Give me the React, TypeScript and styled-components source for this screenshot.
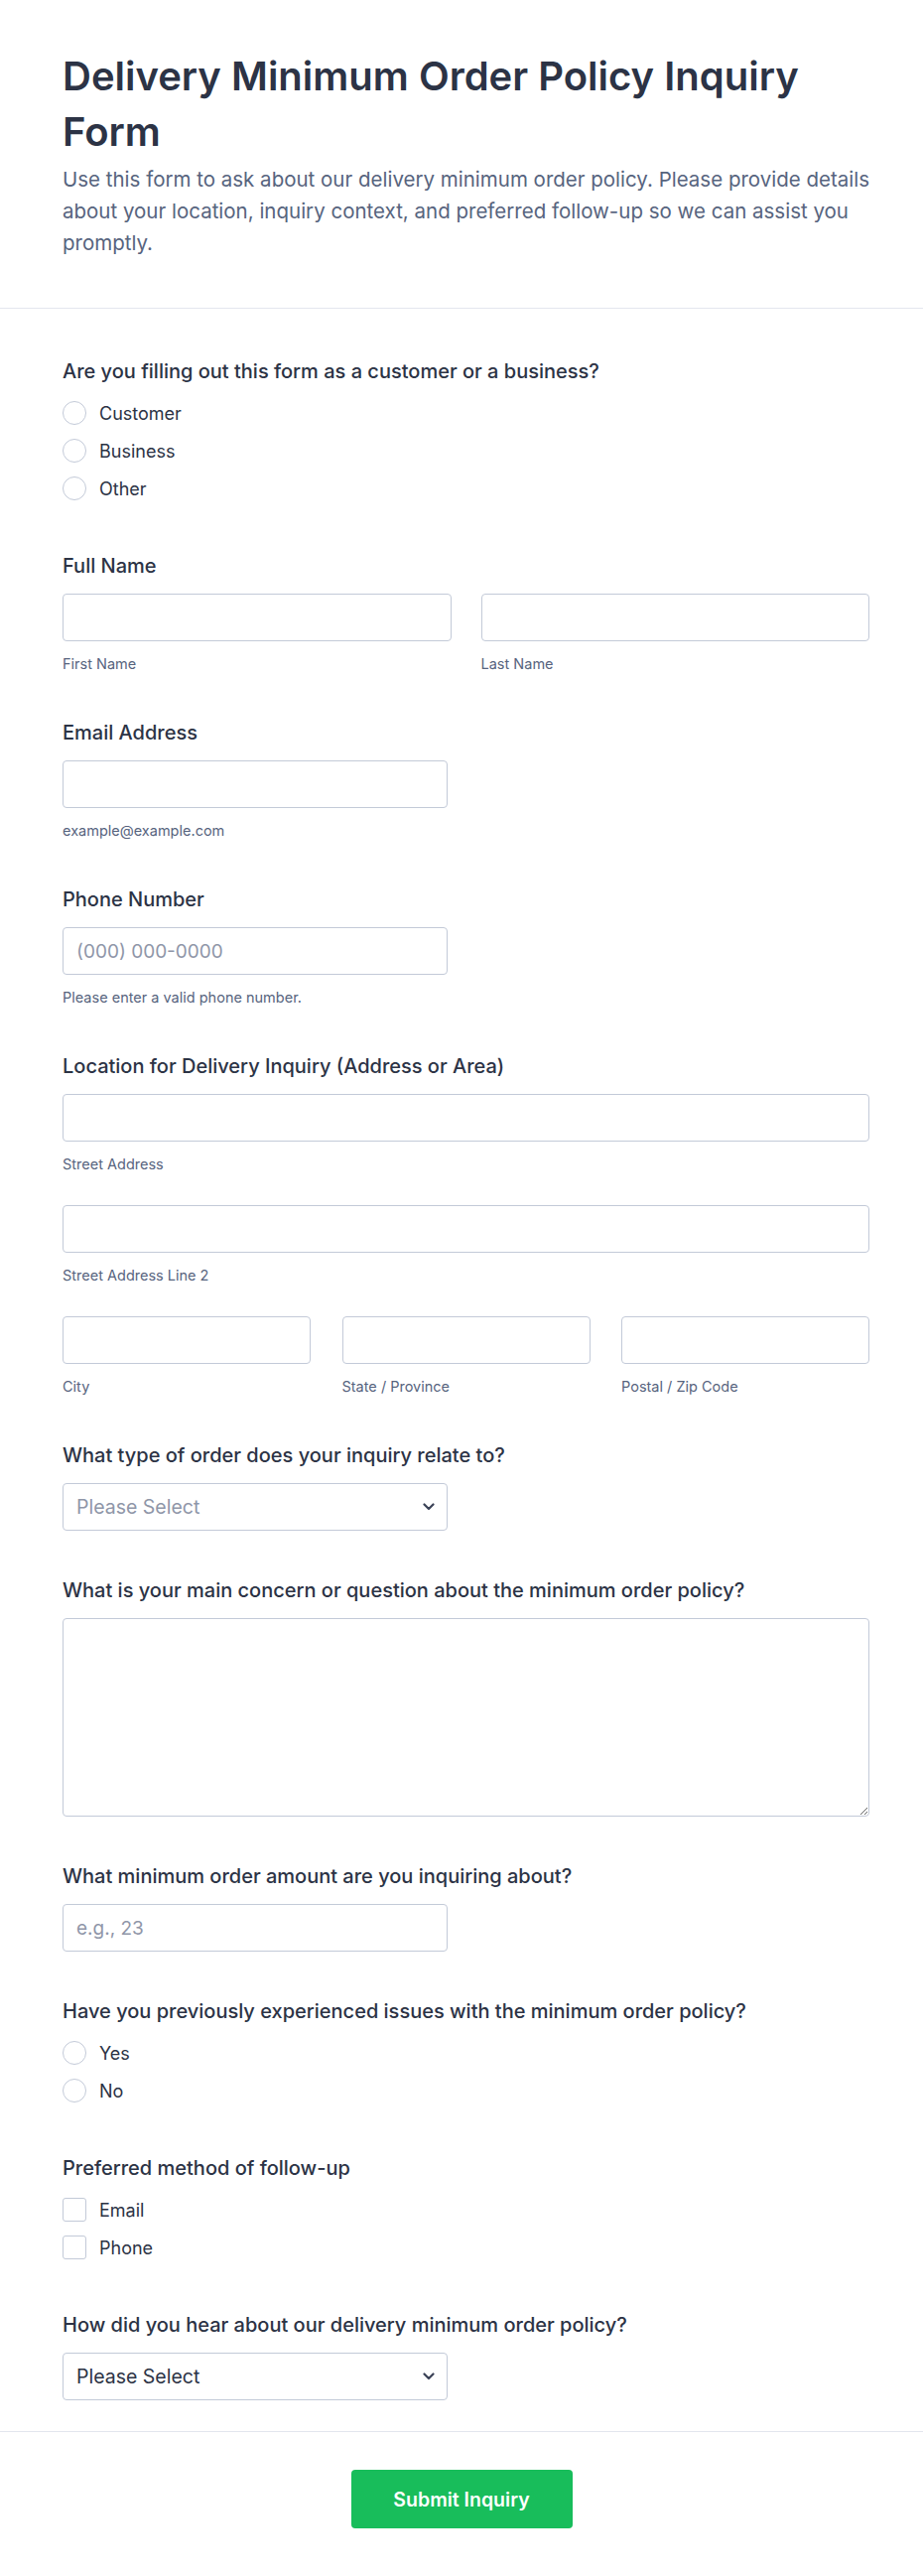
import React from "react";
import styled, { createGlobalStyle } from "styled-components";

const GlobalStyle = createGlobalStyle`
    * { box-sizing: border-box; }
    body {
        margin: 0;
        background: #fff;
        font-family: Inter, "Noto Sans", sans-serif;
        color: #2c3345;
    }
`;

const Page = styled.div`
    width: 930px;
    background: #fff;
`;

const Header = styled.header`
    padding: 49px 40px 49px 63px;
    border-bottom: 1px solid #e3e6ee;
`;

const Title = styled.h1`
    margin: 0;
    font-size: 40px;
    line-height: 56px;
    font-weight: 600;
    color: #2c3345;
`;

const Description = styled.p`
    margin: 4px 0 0;
    font-size: 20.5px;
    line-height: 32px;
    color: #57647e;
`;

const Body = styled.div`
    padding: 51px 54px 31px 63px;
    display: flex;
    flex-direction: column;
    gap: 48px;
`;

const Field = styled.div`
    display: flex;
    flex-direction: column;
`;

const Label = styled.label`
    display: block;
    font-size: 20px;
    line-height: 24px;
    font-weight: 500;
    color: #2c3345;
    margin-bottom: 16px;
`;

const Options = styled.div`
    display: flex;
    flex-direction: column;
    gap: 10px;
    padding-bottom: 4px;
`;

const OptionRow = styled.label`
    display: flex;
    align-items: center;
    gap: 13px;
    height: 28px;
    font-size: 18px;
    color: #2c3345;
`;

const Radio = styled.span`
    width: 24px;
    height: 24px;
    border: 1.5px solid #c3cad8;
    border-radius: 50%;
    background: #fff;
    flex-shrink: 0;
`;

const Checkbox = styled.span`
    width: 24px;
    height: 24px;
    border: 1.5px solid #c3cad8;
    border-radius: 3px;
    background: #fff;
    flex-shrink: 0;
`;

const Grid = styled.div<{ $cols: number; $gap: number }>`
    display: grid;
    grid-template-columns: repeat(${p => p.$cols}, 1fr);
    column-gap: ${p => p.$gap}px;
`;

const Cell = styled.div<{ $spaced?: boolean }>`
    display: flex;
    flex-direction: column;
    ${p => p.$spaced ? "margin-bottom: 32px;" : ""}
`;

const TextInput = styled.input<{ $half?: boolean }>`
    display: block;
    width: ${p => p.$half ? "388px" : "100%"};
    height: 48px;
    padding: 0 13px;
    border: 1px solid #c3cad8;
    border-radius: 4px;
    font-family: inherit;
    font-size: 19px;
    color: #2c3345;
    background: #fff;
    outline: none;
    &::placeholder { color: #8f96a8; }
`;

const TextArea = styled.textarea`
    display: block;
    width: 100%;
    height: 200px;
    padding: 12px 13px;
    border: 1px solid #c3cad8;
    border-radius: 4px;
    font-family: inherit;
    font-size: 19px;
    color: #2c3345;
    outline: none;
`;

const SelectWrap = styled.div`
    position: relative;
    width: 388px;
`;

const Select = styled.select<{ $placeholder?: boolean }>`
    display: block;
    width: 100%;
    height: 48px;
    padding: 0 36px 0 13px;
    border: 1px solid #c3cad8;
    border-radius: 4px;
    font-family: inherit;
    font-size: 19.5px;
    color: ${p => p.$placeholder ? "#8f96a8" : "#2c3345"};
    background: #fff;
    appearance: none;
    outline: none;
`;

const Chevron = styled.svg`
    position: absolute;
    right: 13px;
    top: 50%;
    margin-top: -4px;
    pointer-events: none;
`;

const SubLabel = styled.span`
    margin-top: 14px;
    font-size: 14.5px;
    line-height: 18px;
    color: #57647e;
`;

const Footer = styled.div`
    border-top: 1px solid #e3e6ee;
    padding: 38px 0 49px;
    display: flex;
    justify-content: center;
`;

const SubmitButton = styled.button`
    width: 223px;
    height: 59px;
    border: none;
    border-radius: 4px;
    background: #18bd5b;
    color: #fff;
    font-family: inherit;
    font-size: 19.5px;
    font-weight: 600;
    cursor: pointer;
`;

function ChevronIcon() {
    return <Chevron width="12" height="8" viewBox="0 0 12 8" fill="none">
        <path d="M1.5 1.5L6 6L10.5 1.5" stroke="#3b4257" strokeWidth="2.2" strokeLinecap="round" strokeLinejoin="round" />
    </Chevron>;
}

function RadioGroup({ items }: { items: string[] }) {
    return <Options>
        {items.map(i => <OptionRow key={i}><Radio />{i}</OptionRow>)}
    </Options>;
}

function CheckGroup({ items }: { items: string[] }) {
    return <Options>
        {items.map(i => <OptionRow key={i}><Checkbox />{i}</OptionRow>)}
    </Options>;
}

export default function App() {
    return <Page>
        <GlobalStyle />
        <Header>
            <Title>Delivery Minimum Order Policy Inquiry Form</Title>
            <Description>
                Use this form to ask about our delivery minimum order policy. Please provide details about your location, inquiry context, and preferred follow-up so we can assist you promptly.
            </Description>
        </Header>
        <Body>
            <Field>
                <Label>Are you filling out this form as a customer or a business?</Label>
                <RadioGroup items={["Customer", "Business", "Other"]} />
            </Field>
            <Field>
                <Label>Full Name</Label>
                <Grid $cols={2} $gap={30}>
                    <Cell><TextInput /><SubLabel>First Name</SubLabel></Cell>
                    <Cell><TextInput /><SubLabel>Last Name</SubLabel></Cell>
                </Grid>
            </Field>
            <Field>
                <Label>Email Address</Label>
                <TextInput $half type="email" />
                <SubLabel>example@example.com</SubLabel>
            </Field>
            <Field>
                <Label>Phone Number</Label>
                <TextInput $half type="tel" placeholder="(000) 000-0000" />
                <SubLabel>Please enter a valid phone number.</SubLabel>
            </Field>
            <Field>
                <Label>Location for Delivery Inquiry (Address or Area)</Label>
                <Cell $spaced><TextInput /><SubLabel>Street Address</SubLabel></Cell>
                <Cell $spaced><TextInput /><SubLabel>Street Address Line 2</SubLabel></Cell>
                <Grid $cols={3} $gap={31.5}>
                    <Cell><TextInput /><SubLabel>City</SubLabel></Cell>
                    <Cell><TextInput /><SubLabel>State / Province</SubLabel></Cell>
                    <Cell><TextInput /><SubLabel>Postal / Zip Code</SubLabel></Cell>
                </Grid>
            </Field>
            <Field>
                <Label>What type of order does your inquiry relate to?</Label>
                <SelectWrap>
                    <Select $placeholder defaultValue="">
                        <option value="">Please Select</option>
                        <option>Grocery</option>
                        <option>Restaurant</option>
                        <option>Retail</option>
                        <option>Other</option>
                    </Select>
                    <ChevronIcon />
                </SelectWrap>
            </Field>
            <Field>
                <Label>What is your main concern or question about the minimum order policy?</Label>
                <TextArea />
            </Field>
            <Field>
                <Label>What minimum order amount are you inquiring about?</Label>
                <TextInput $half type="number" placeholder="e.g., 23" />
            </Field>
            <Field>
                <Label>Have you previously experienced issues with the minimum order policy?</Label>
                <RadioGroup items={["Yes", "No"]} />
            </Field>
            <Field>
                <Label>Preferred method of follow-up</Label>
                <CheckGroup items={["Email", "Phone"]} />
            </Field>
            <Field>
                <Label>How did you hear about our delivery minimum order policy?</Label>
                <SelectWrap>
                    <Select defaultValue="">
                        <option value="">Please Select</option>
                        <option>Website</option>
                        <option>Social Media</option>
                        <option>Friend or Family</option>
                        <option>Other</option>
                    </Select>
                    <ChevronIcon />
                </SelectWrap>
            </Field>
        </Body>
        <Footer>
            <SubmitButton type="button">Submit Inquiry</SubmitButton>
        </Footer>
    </Page>;
}
